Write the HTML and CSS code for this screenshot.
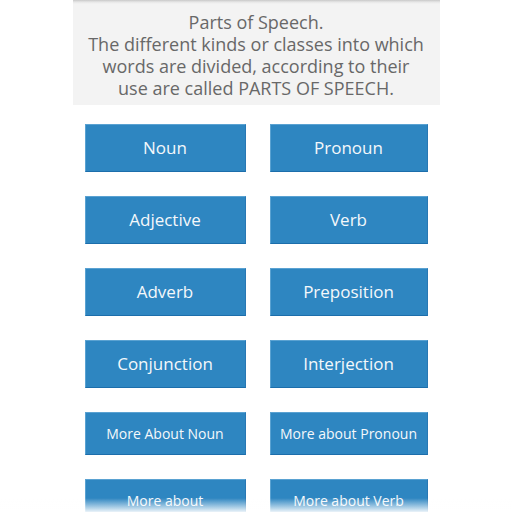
FILE: index.html
```html
<!DOCTYPE html>
<html lang="en">
<head>
    <meta charset="UTF-8">
    <title>Parts of Speech</title>
    <link rel="stylesheet" href="styles.css">
</head>
<body>
<div class="screen">
    <div class="intro">
        Parts of Speech.<br>
        The different kinds or classes into which<br>
        words are divided, according to their<br>
        use are called PARTS OF SPEECH.
    </div>
    <div class="grid">
        <a class="btn">Noun</a>
        <a class="btn">Pronoun</a>
        <a class="btn">Adjective</a>
        <a class="btn">Verb</a>
        <a class="btn">Adverb</a>
        <a class="btn">Preposition</a>
        <a class="btn">Conjunction</a>
        <a class="btn">Interjection</a>
        <a class="btn small">More About Noun</a>
        <a class="btn small">More about Pronoun</a>
        <a class="btn small">More about<br>Adjective</a>
        <a class="btn small">More about Verb</a>
    </div>
</div>
<div class="fade"></div>
</body>
</html>
```

FILE: styles.css
```css
*{
    margin:0;
    padding:0;
    box-sizing: border-box;
}
html,body{
    height: 100%;
    overflow: hidden;
    background: #fff;
}
body{
    font-family: "Open Sans", "Noto Sans", sans-serif;
}
.screen{
    width: 367px;
    margin: 0 auto;
}
.intro{
    height: 105px;
    padding: 11px 4px 0;
    text-align: center;
    font-size: 18px;
    line-height: 22px;
    color: #686868;
    white-space: nowrap;
    background: #f3f3f3;
    background: linear-gradient(to bottom, #c8c8c8 0, #e6e6e6 2px, #f3f3f3 4px, #f3f3f3 100%);
}
.grid{
    display: grid;
    grid-template-columns: 161px 158px;
    column-gap: 24px;
    row-gap: 24px;
    padding: 19px 12px 0;
}
.btn{
    display: flex;
    align-items: center;
    justify-content: center;
    height: 48px;
    background: #2e86c1;
    border-top: 1px solid #5aa2d2;
    border-left: 1px solid #5aa2d2;
    border-bottom: 1px solid #1c6eab;
    border-right: 1px solid #2878b4;
    color: #f4f8fb;
    font-size: 17px;
    padding-bottom: 2px;
}
.btn.small{
    display: block;
    height: auto;
    min-height: 43px;
    padding: 10px 0;
    font-size: 14px;
    line-height: 21px;
    text-align: center;
    white-space: nowrap;
}
.fade{
    position: fixed;
    left: 0;
    right: 0;
    bottom: 0;
    height: 14px;
    background: linear-gradient(to bottom, rgba(255,255,255,0), rgba(255,255,255,0.9));
}
```
